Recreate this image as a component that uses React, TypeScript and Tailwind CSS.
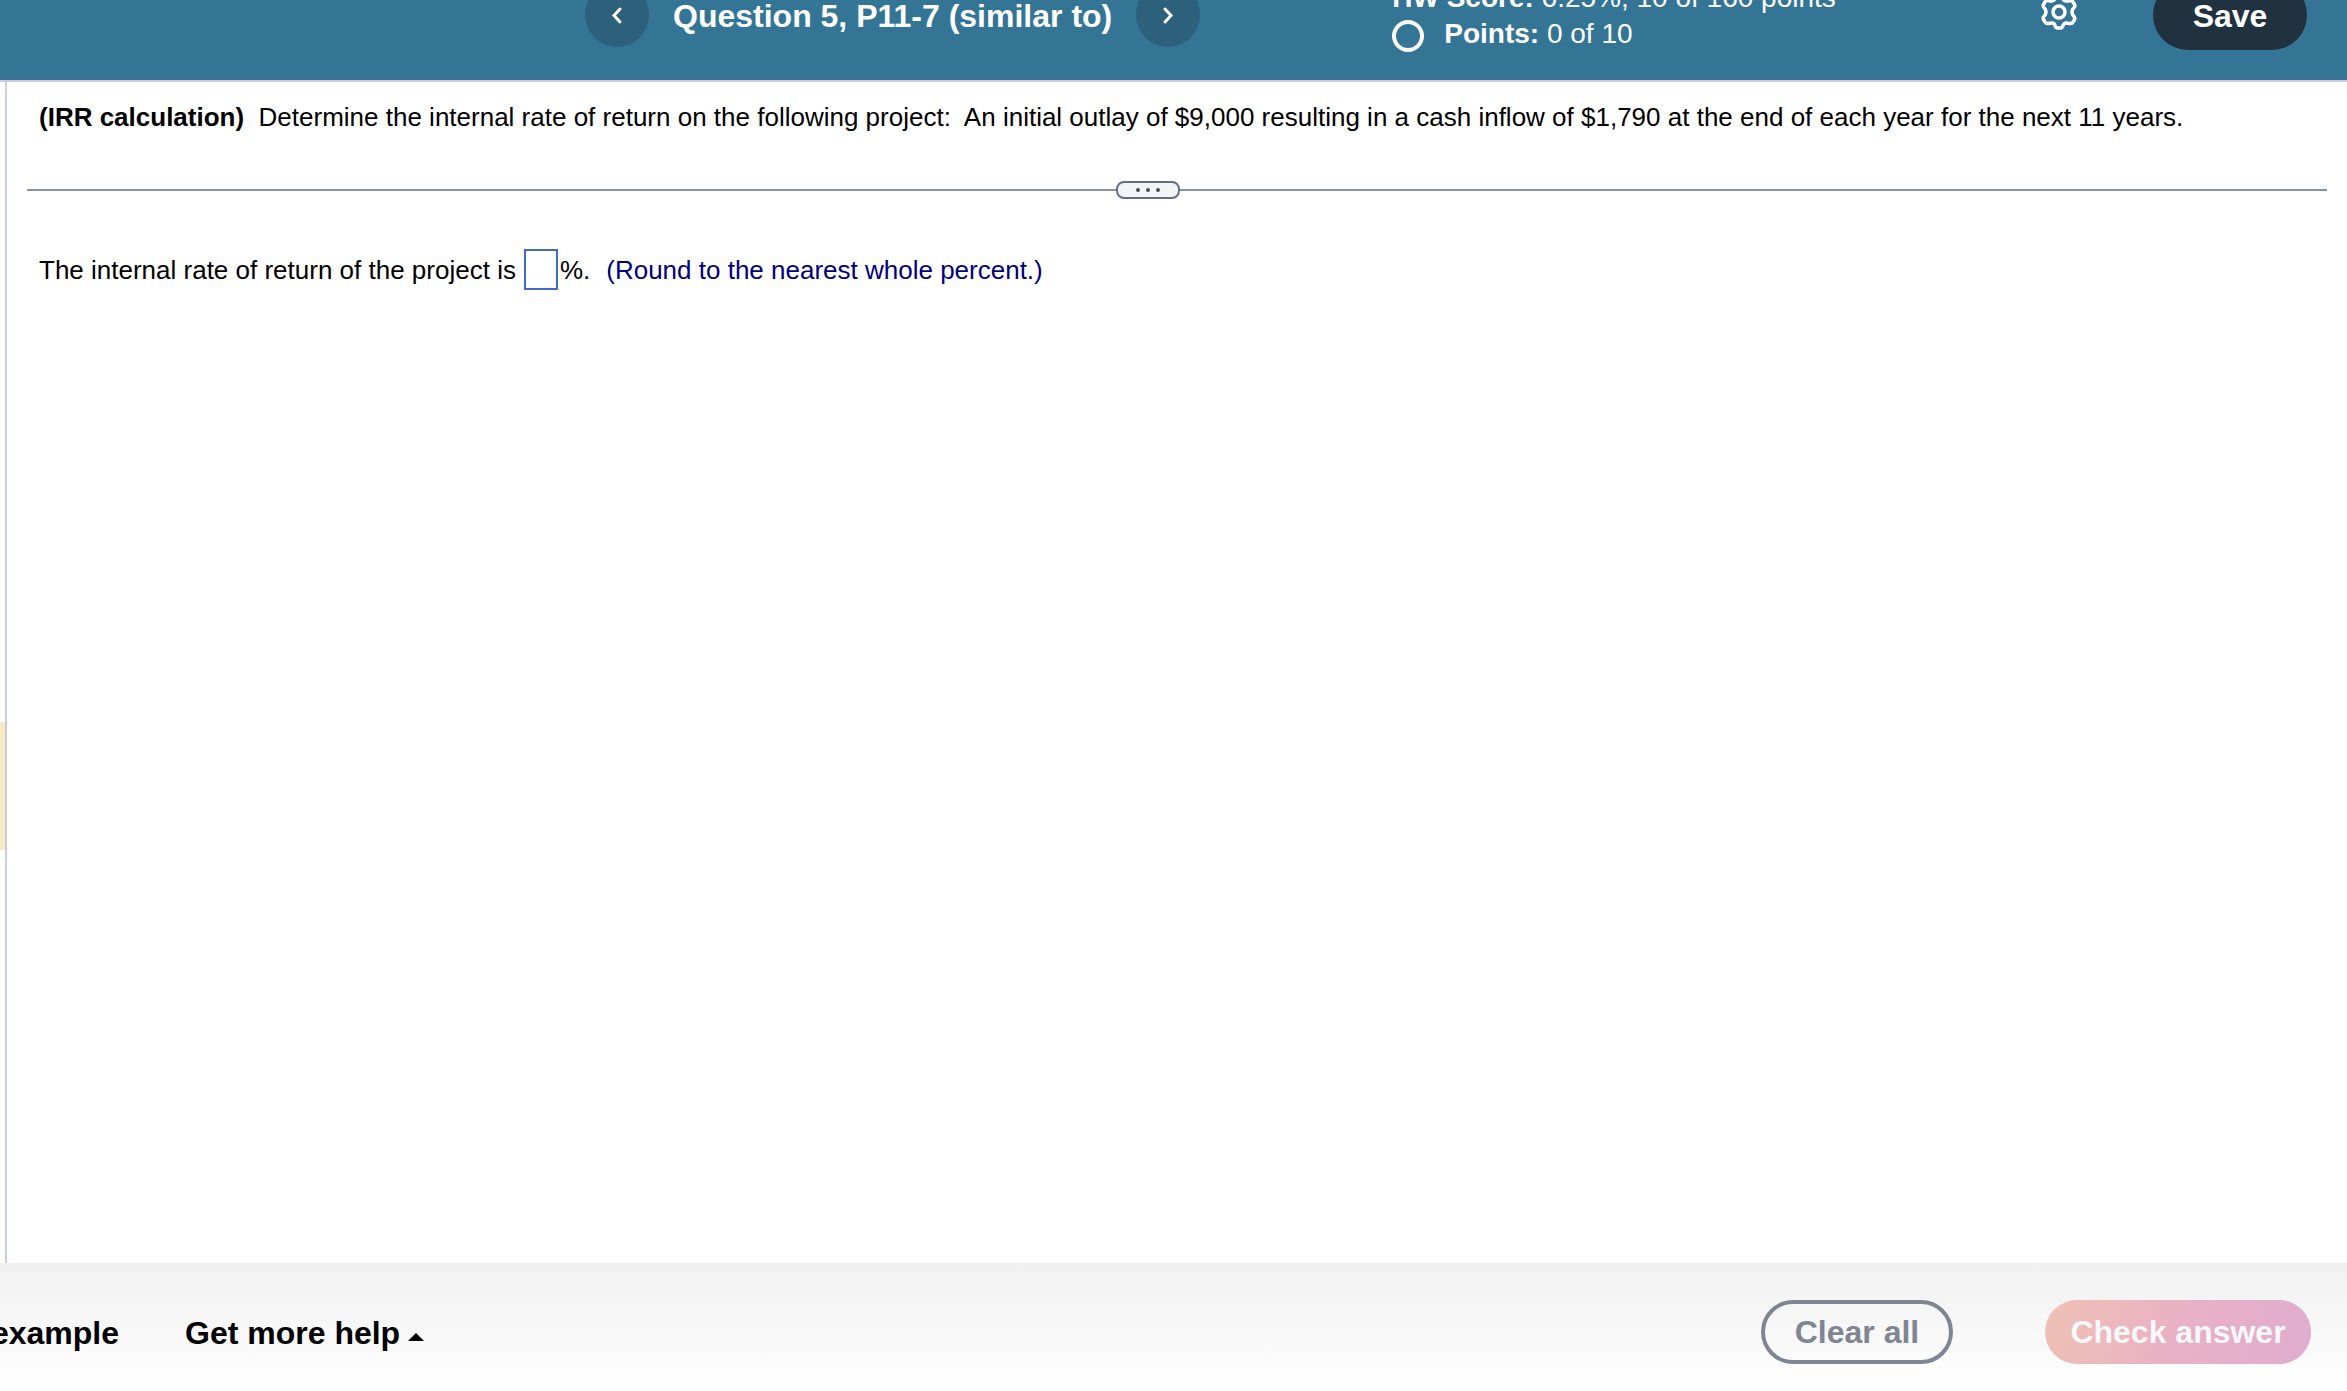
import { useState } from 'react';

interface RoundButtonProps {
  label: string;
  path: string;
}

function RoundButton({ label, path }: RoundButtonProps) {
  return (
    <button
      aria-label={label}
      className="flex h-16 w-16 shrink-0 items-center justify-center rounded-full bg-[#2d607b] text-white"
    >
      <svg className="h-5 w-5" viewBox="0 0 20 20" fill="none" stroke="currentColor" strokeWidth={3}>
        <path strokeLinecap="round" d={path} />
      </svg>
    </button>
  );
}

function GearIcon() {
  return (
    <svg className="h-9 w-9" viewBox="0 0 36 36" fill="none" stroke="currentColor" strokeWidth={3.5} strokeLinejoin="round">
      <path d="M14 4.500q.5-2.500 2.500-2.500h3q2 0 2.500 2.500t3 2.500 4-.5 3 1.500l1.500 2.500q1 2-.8 3.500t-1.700 4 1.700 4 .8 3.500l-1.500 2.500q-1 2-3 1.500t-4-.5-3 2.500-2.500 2.500h-3q-2 0-2.500-2.500t-3-2.500-4 .5-3-1.500l-1.500-2.500q-1-2 .8-3.500t1.700-4-1.700-4-.8-3.500l1.500-2.500q1-2 3-1.500t4 .5 3-2.500z" />
      <circle cx="18" cy="18" r="6" />
    </svg>
  );
}

function Header() {
  return (
    <header className="flex h-[82px] flex-col justify-end overflow-hidden border-b-2 border-[#c9cddc] bg-[#347596] text-white">
      <div className="mb-[30px] flex h-[70px] shrink-0 items-center pr-10 pl-[585px] whitespace-nowrap">
        <nav className="flex items-center gap-6">
          <RoundButton label="Previous question" path="M13 4L7 10.500l6 6.500" />
          <h1 className="pt-0.5 text-[32px] leading-10 font-bold">Question 5, P11-7 (similar to)</h1>
          <RoundButton label="Next question" path="M7 4l6 6.500-6 6.500" />
        </nav>
        <div className="ml-48 pt-0.5 text-[28px] leading-9">
          <p>
            <b>HW Score:</b> 6.25%, 10 of 160 points
          </p>
          <p className="flex items-end gap-5">
            <span className="h-8 w-8 rounded-full border-4 border-white" />
            <span>
              <b>Points:</b> 0 of 10
            </span>
          </p>
        </div>
        <div className="ml-auto flex items-center gap-[76px]">
          <button aria-label="Settings" className="pb-1.5">
            <GearIcon />
          </button>
          <button className="h-[70px] w-[154px] rounded-full bg-[#203140] pt-0.5 text-[32px] font-bold">Save</button>
        </div>
      </div>
    </header>
  );
}

function Divider() {
  return (
    <div className="mx-5 flex items-center">
      <div className="h-0.5 flex-[19] bg-[#8792a1]" />
      <button
        aria-label="Resize panes"
        className="flex h-[18px] w-16 items-center justify-center gap-1.5 rounded-lg border-2 border-[#637083] bg-[#f3f4f5]"
      >
        <span className="h-1 w-1 rounded-full bg-[#4a4f57]" />
        <span className="h-1 w-1 rounded-full bg-[#4a4f57]" />
        <span className="h-1 w-1 rounded-full bg-[#4a4f57]" />
      </button>
      <div className="h-0.5 flex-[20] bg-[#8792a1]" />
    </div>
  );
}

function Footer() {
  return (
    <footer className="flex items-center bg-linear-to-b from-[#f0f0f0] to-white pt-[37px] pr-9 pb-[27px] text-[32px] leading-10 font-bold whitespace-nowrap">
      <div className="flex w-[119px] justify-end overflow-hidden pt-0.5">
        <button>example</button>
      </div>
      <button className="ml-[66px] flex items-center gap-2 pt-0.5">
        Get more help
        <svg className="mt-2 h-2 w-4" viewBox="0 0 16 8" fill="currentColor">
          <path d="M0 8l8-8 8 8z" />
        </svg>
      </button>
      <button className="ml-auto h-16 w-48 rounded-full border-4 border-[#7f8593] text-[#7f8593]">Clear all</button>
      <button
        disabled
        className="ml-[92px] h-16 w-[266px] rounded-full bg-linear-110 from-[#efc1b3] via-[#e9b1c5] to-[#dfacce] text-[#f9f8fa]"
      >
        Check answer
      </button>
    </footer>
  );
}

export default function App() {
  const [answer, setAnswer] = useState('');

  return (
    <div className="flex min-h-screen flex-col bg-white font-['Liberation_Sans',Arial,sans-serif] text-black">
      <Header />
      <div className="flex flex-1">
        <div className="flex w-[5px] flex-col pt-[640px]">
          <div className="h-32 bg-[#f8ebc4]" />
        </div>
        <main className="flex-1 border-l-2 border-[#c9cddc] text-[26px] leading-8">
          <p className="px-8 pt-[19px] pb-12">
            <b>(IRR calculation)</b>&nbsp; Determine the internal rate of return on the following project:&nbsp; An
            initial outlay of $9,000 resulting in a cash inflow of $1,790 at the end of each year for the next 11 years.
          </p>
          <Divider />
          <div className="flex items-center px-8 pt-[50px]">
            <label htmlFor="answer">The internal rate of return of the project is</label>
            <input
              id="answer"
              type="text"
              value={answer}
              onChange={(e) => setAnswer(e.target.value)}
              className="mr-0.5 ml-2 h-[41px] w-[34px] border-2 border-[#4069ca] text-center outline-none"
            />
            <span>%.</span>
            <span className="ml-4 text-[#00007f]">(Round to the nearest whole percent.)</span>
          </div>
        </main>
      </div>
      <Footer />
    </div>
  );
}
